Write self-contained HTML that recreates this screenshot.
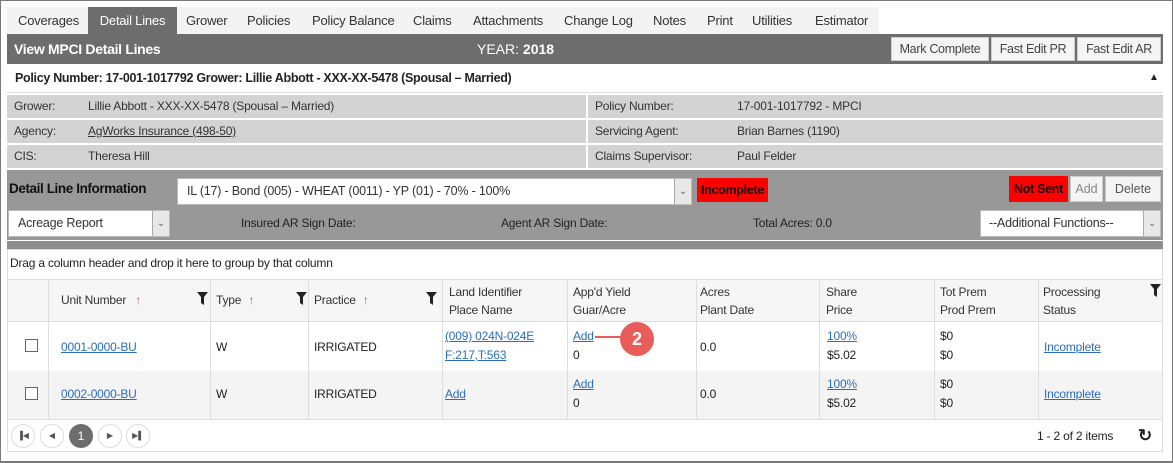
<!DOCTYPE html>
<html><head><style>
*{box-sizing:border-box;margin:0;padding:0}
body{width:1173px;height:463px;background:#fff;font-family:"Liberation Sans",sans-serif;font-size:12px;color:#222;position:relative;overflow:hidden}
.frame{position:absolute;left:0;top:0;width:1173px;height:463px;border:1px solid #7a7a7a;border-bottom:2px solid #7a7a7a}
.abs{position:absolute}
.tabs{left:7px;top:7px;width:872px;height:27px;background:#f3f3f3}
.tab{position:absolute;top:0;height:27px;line-height:27px;font-size:13px;color:#333;letter-spacing:-0.2px}
.hdr{left:7px;top:34px;width:1156px;height:30px;background:#6d6d6d;color:#fff}
.btn{position:absolute;top:3px;height:24px;line-height:22px;background:#f4f4f4;border:1px solid #ccc;color:#444;font-size:12.5px;text-align:center;letter-spacing:-0.3px}
.info{position:absolute;height:23px;background:#d3d3d3;line-height:23px;font-size:12px;color:#333;letter-spacing:-0.2px}
.gp{left:7px;top:170px;width:1156px;height:70px;background:#989898}
.sel{position:absolute;background:#fff;border:1px solid #bbb;height:27px;line-height:25px;padding-left:9px;font-size:12.5px;color:#333;letter-spacing:-0.2px}
.dd{position:absolute;right:0;top:0;width:17px;height:25px;background:#e8e8e8;border-left:1px solid #aaa;font-size:10px;text-align:center;color:#666;line-height:25px}
.grid{left:7px;top:249px;width:1156px;height:203px;border:1px solid #ddd}
.col{position:absolute;top:279px;height:140px;border-left:1px solid #ddd}
.th{position:absolute;font-size:12px;color:#333;line-height:18px;letter-spacing:-0.2px}
a{color:#2a6ebb;text-decoration:underline}
.td{position:absolute;font-size:12px;line-height:19px;color:#222;letter-spacing:-0.2px}
.pg{position:absolute;top:424px;width:24px;height:24px;border:1px solid #ddd;border-radius:50%;text-align:center;line-height:22px;font-size:8px;color:#555}
.fl{position:absolute;top:292px;width:11px;height:13px}
</style></head><body>
<div class="frame"></div>
<div class="abs tabs">
<span class="tab" style="left:11px">Coverages</span>
<span class="tab" style="left:81px;width:89px;background:#6d6d6d;color:#fff;text-align:center">Detail Lines</span>
<span class="tab" style="left:179px">Grower</span>
<span class="tab" style="left:240px">Policies</span>
<span class="tab" style="left:305px">Policy Balance</span>
<span class="tab" style="left:406px">Claims</span>
<span class="tab" style="left:466px">Attachments</span>
<span class="tab" style="left:557px">Change Log</span>
<span class="tab" style="left:646px">Notes</span>
<span class="tab" style="left:700px">Print</span>
<span class="tab" style="left:745px">Utilities</span>
<span class="tab" style="left:808px">Estimator</span>
</div>
<div class="abs hdr">
<span class="abs" style="left:7px;top:7px;font-weight:bold;font-size:14px;letter-spacing:-0.3px">View MPCI Detail Lines</span>
<span class="abs" style="left:470px;top:7px;font-size:14px">YEAR: <b>2018</b></span>
<span class="btn" style="left:884px;width:98px">Mark Complete</span>
<span class="btn" style="left:984px;width:84px">Fast Edit PR</span>
<span class="btn" style="left:1070px;width:84px">Fast Edit AR</span>
</div>
<div class="abs" style="left:15px;top:71px;font-weight:bold;font-size:12.5px;color:#222;letter-spacing:-0.3px">Policy Number: 17-001-1017792 Grower: Lillie Abbott - XXX-XX-5478 (Spousal – Married)</div>
<div class="abs" style="left:1149px;top:72px;font-size:10px">▲</div>
<div class="abs" style="left:7px;top:92px;width:1156px;height:1px;background:#ddd"></div>
<div class="info" style="left:7px;top:95px;width:579px"><span style="position:absolute;left:7px">Grower:</span><span style="position:absolute;left:81px">Lillie Abbott - XXX-XX-5478 (Spousal – Married)</span></div>
<div class="info" style="left:588px;top:95px;width:575px"><span style="position:absolute;left:7px">Policy Number:</span><span style="position:absolute;left:149px">17-001-1017792 - MPCI</span></div>
<div class="info" style="left:7px;top:120px;width:579px"><span style="position:absolute;left:7px">Agency:</span><span style="position:absolute;left:81px;text-decoration:underline">AgWorks Insurance (498-50)</span></div>
<div class="info" style="left:588px;top:120px;width:575px"><span style="position:absolute;left:7px">Servicing Agent:</span><span style="position:absolute;left:149px">Brian Barnes (1190)</span></div>
<div class="info" style="left:7px;top:145px;width:579px"><span style="position:absolute;left:7px">CIS:</span><span style="position:absolute;left:81px">Theresa Hill</span></div>
<div class="info" style="left:588px;top:145px;width:575px"><span style="position:absolute;left:7px">Claims Supervisor:</span><span style="position:absolute;left:149px">Paul Felder</span></div>
<div class="abs gp">
<span class="abs" style="left:2px;top:11px;font-weight:bold;font-size:13.5px;color:#111;letter-spacing:-0.4px">Detail Line Information</span>
<div class="sel" style="left:170px;top:8px;width:515px">IL (17) - Bond (005) - WHEAT (0011) - YP (01) - 70% - 100%<span class="dd">⌄</span></div>
<span class="abs" style="left:690px;top:8px;width:71px;height:24px;background:#f00;color:#111;font-weight:bold;font-size:12.5px;line-height:24px;text-align:center;letter-spacing:-0.3px">Incomplete</span>
<span class="abs" style="left:1002px;top:6px;width:59px;height:26px;background:#f00;color:#111;font-weight:bold;font-size:12.5px;line-height:26px;text-align:center;letter-spacing:-0.3px">Not Sent</span>
<span class="abs" style="left:1063px;top:6px;width:33px;height:26px;background:#f4f4f4;border:1px solid #ccc;color:#888;line-height:24px;text-align:center;font-size:12.5px">Add</span>
<span class="abs" style="left:1098px;top:6px;width:56px;height:26px;background:#f4f4f4;border:1px solid #ccc;color:#555;line-height:24px;text-align:center;font-size:12.5px">Delete</span>
<div class="sel" style="left:1px;top:40px;width:162px">Acreage Report<span class="dd">⌄</span></div>
<span class="abs" style="left:234px;top:46px;color:#222;letter-spacing:-0.2px">Insured AR Sign Date:</span>
<span class="abs" style="left:494px;top:46px;color:#222;letter-spacing:-0.2px">Agent AR Sign Date:</span>
<span class="abs" style="left:746px;top:46px;color:#222;letter-spacing:-0.2px">Total Acres: 0.0</span>
<div class="sel" style="left:973px;top:40px;width:181px;padding-left:8px">--Additional Functions--<span class="dd">⌄</span></div>
</div>
<div class="abs" style="left:7px;top:241px;width:1156px;height:8px;background:#8e8e8e"></div>
<div class="abs grid"></div>
<div class="abs" style="left:10px;top:256px;color:#222;letter-spacing:-0.2px">Drag a column header and drop it here to group by that column</div>
<div class="abs" style="left:8px;top:279px;width:1154px;height:43px;background:#f6f6f6;border-top:1px solid #ddd;border-bottom:1px solid #ddd"></div>
<div class="abs" style="left:8px;top:371px;width:1154px;height:48px;background:#f4f4f4"></div>
<div class="abs" style="left:8px;top:419px;width:1154px;height:1px;background:#ddd"></div>
<div class="col" style="left:48px"></div><div class="col" style="left:210px"></div><div class="col" style="left:308px"></div><div class="col" style="left:442px"></div><div class="col" style="left:567px"></div><div class="col" style="left:696px"></div><div class="col" style="left:819px"></div><div class="col" style="left:934px"></div><div class="col" style="left:1038px"></div>
<div class="th" style="left:61px;top:291px">Unit Number <span style="color:#a67;margin-left:6px">↑</span></div>
<svg class="fl" style="left:197px" viewBox="0 0 11 13"><path d="M0 0H11L7 5V13L4 11V5Z" fill="#222"/></svg>
<div class="th" style="left:216px;top:291px">Type <span style="color:#a67;margin-left:4px">↑</span></div>
<svg class="fl" style="left:296px" viewBox="0 0 11 13"><path d="M0 0H11L7 5V13L4 11V5Z" fill="#222"/></svg>
<div class="th" style="left:314px;top:291px">Practice <span style="color:#58a;margin-left:4px">↑</span></div>
<svg class="fl" style="left:426px" viewBox="0 0 11 13"><path d="M0 0H11L7 5V13L4 11V5Z" fill="#222"/></svg>
<div class="th" style="left:449px;top:283px">Land Identifier<br>Place Name</div>
<div class="th" style="left:573px;top:283px">App'd Yield<br>Guar/Acre</div>
<div class="th" style="left:700px;top:283px">Acres<br>Plant Date</div>
<div class="th" style="left:826px;top:283px">Share<br>Price</div>
<div class="th" style="left:940px;top:283px">Tot Prem<br>Prod Prem</div>
<div class="th" style="left:1043px;top:283px">Processing<br>Status</div>
<svg class="fl" style="left:1150px;top:284px" viewBox="0 0 11 13"><path d="M0 0H11L7 5V13L4 11V5Z" fill="#222"/></svg>
<div class="abs" style="left:25px;top:339px;width:13px;height:13px;border:1px solid #666;background:#fff"></div>
<div class="abs" style="left:25px;top:387px;width:13px;height:13px;border:1px solid #666;background:#fff"></div>
<div class="td" style="left:61px;top:338px"><a>0001-0000-BU</a></div>
<div class="td" style="left:216px;top:338px">W</div>
<div class="td" style="left:314px;top:338px">IRRIGATED</div>
<div class="td" style="left:445px;top:327px"><a>(009) 024N-024E</a><br><a>F:217,T:563</a></div>
<div class="td" style="left:573px;top:327px"><a>Add</a><br>0</div>
<div class="td" style="left:700px;top:338px">0.0</div>
<div class="td" style="left:827px;top:327px"><a>100%</a><br>$5.02</div>
<div class="td" style="left:940px;top:327px">$0<br>$0</div>
<div class="td" style="left:1044px;top:338px"><a>Incomplete</a></div>
<div class="td" style="left:61px;top:385px"><a>0002-0000-BU</a></div>
<div class="td" style="left:216px;top:385px">W</div>
<div class="td" style="left:314px;top:385px">IRRIGATED</div>
<div class="td" style="left:445px;top:385px"><a>Add</a></div>
<div class="td" style="left:573px;top:375px"><a>Add</a><br>0</div>
<div class="td" style="left:700px;top:385px">0.0</div>
<div class="td" style="left:827px;top:375px"><a>100%</a><br>$5.02</div>
<div class="td" style="left:940px;top:375px">$0<br>$0</div>
<div class="td" style="left:1044px;top:385px"><a>Incomplete</a></div>
<div class="abs" style="left:595px;top:336px;width:26px;height:2px;background:#e85c5a"></div>
<div class="abs" style="left:620px;top:322px;width:34px;height:34px;border-radius:50%;background:#e85c5a;color:#fff;font-weight:bold;font-size:18px;text-align:center;line-height:34px">2</div>
<div class="pg" style="left:11px">▐◀</div>
<div class="pg" style="left:40px">◀</div>
<div class="pg" style="left:69px;background:#6d6d6d;border-color:#6d6d6d;color:#fff;font-size:12px">1</div>
<div class="pg" style="left:98px">▶</div>
<div class="pg" style="left:126px">▶▌</div>
<div class="abs" style="left:1037px;top:429px;color:#222;letter-spacing:-0.2px">1 - 2 of 2 items</div>
<div class="abs" style="left:1138px;top:426px;font-size:17px;font-weight:bold;color:#222">↻</div>
</body></html>
